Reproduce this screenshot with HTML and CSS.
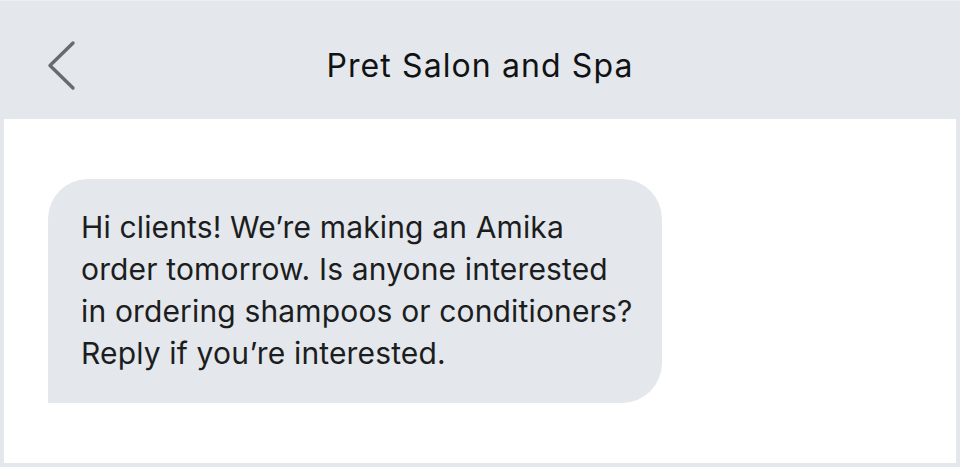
FILE: index.html
```html
<!DOCTYPE html>
<html lang="en">
<head>
<meta charset="utf-8">
<title>Pret Salon and Spa</title>
<link rel="stylesheet" href="styles.css">
</head>
<body>
<div class="screen">
  <header class="topbar">
    <div class="back">
      <svg class="back-icon" width="30" height="52" viewBox="0 0 30 52" aria-hidden="true">
        <polyline points="27,4 4,26.5 27,49" fill="none" stroke="#676b71" stroke-width="3.4" stroke-linecap="round" stroke-linejoin="round"/>
      </svg>
    </div>
    <h1 class="title">Pret Salon and Spa</h1>
    <div class="spacer"></div>
  </header>
  <main class="thread">
    <div class="bubble">Hi clients! We’re making an Amika<br>order tomorrow. Is anyone interested<br>in ordering shampoos or conditioners?<br>Reply if you’re interested.</div>
  </main>
</div>
</body>
</html>
```
FILE: styles.css
```css
* { box-sizing: border-box; }
html, body { margin: 0; padding: 0; }
body {
  background: #e4e7eb;
  font-family: Inter, "Noto Sans", "Liberation Sans", sans-serif;
}
.screen {
  width: 960px;
  height: 467px;
  display: flex;
  flex-direction: column;
  border-top: 1px solid #eceef1;
}
.topbar {
  height: 118px;
  display: grid;
  grid-template-columns: 1fr auto 1fr;
  align-items: start;
}
.back { padding: 38px 0 0 46px; }
.back-icon { display: block; }
.title {
  margin: 0;
  padding-top: 44px;
  font-size: 32px;
  line-height: 42px;
  font-weight: 400;
  letter-spacing: 1.1px;
  color: #111214;
}
.thread {
  background: #ffffff;
  margin: 0 4px;
  height: 344px;
  padding: 60px 0 0 44px;
}
.bubble {
  width: 614px;
  background: #e4e7eb;
  border-radius: 40px 40px 40px 0;
  padding: 27px 20px 29px 33px;
  font-size: 30px;
  line-height: 42px;
  letter-spacing: 0.15px;
  color: #1b1d20;
  white-space: nowrap;
}
```
